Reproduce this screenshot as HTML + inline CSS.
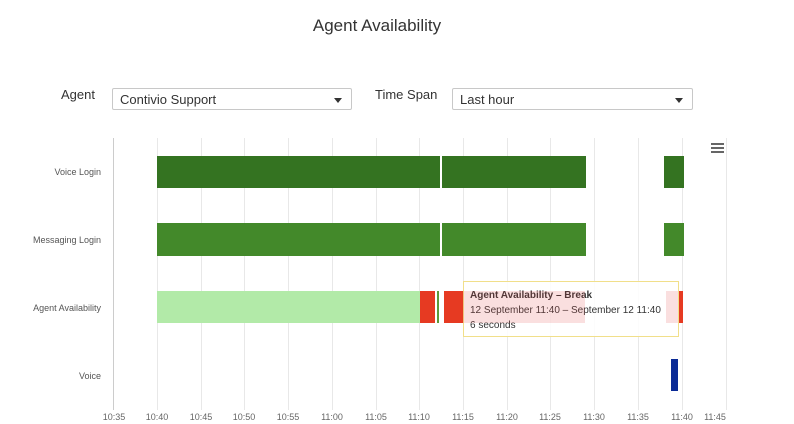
<!DOCTYPE html>
<html><head><style>
body{margin:0;width:794px;height:424px;background:#fff;font-family:"Liberation Sans",sans-serif;position:relative;overflow:hidden}
.a{position:absolute}
.g{position:absolute;top:138px;height:272px;width:1px;background:#e8e8e8}
.lab{position:absolute;font-size:9px;color:#555;text-align:right;width:90px;left:11px}
.tk{position:absolute;top:412px;font-size:9px;color:#666;width:30px;text-align:center}
.sel{position:absolute;height:22px;border:1px solid #c8c8c8;border-radius:2px;font-size:13px;color:#333;line-height:22px;padding-left:7px;box-sizing:border-box}
.sel:after{content:"";position:absolute;right:9px;top:9px;border-left:4px solid transparent;border-right:4px solid transparent;border-top:5px solid #333}
</style></head><body>
<div class="a" style="left:0;width:754px;top:16px;text-align:center;font-size:17px;color:#333">Agent Availability</div>
<div class="a" style="left:61px;top:87px;font-size:13px;color:#333">Agent</div>
<div class="sel" style="left:112px;top:88px;width:240px">Contivio Support</div>
<div class="a" style="left:375px;top:87px;font-size:13px;color:#333">Time Span</div>
<div class="sel" style="left:452px;top:88px;width:241px">Last hour</div>
<div class="a" style="left:711px;top:143px;width:13px;height:2px;background:#666;box-shadow:0 4px 0 #666,0 8px 0 #666"></div>
<div class="a" style="left:113px;top:138px;width:1px;height:272px;background:#ccc"></div>
<div class="g" style="left:157px"></div><div class="g" style="left:201px"></div><div class="g" style="left:244px"></div><div class="g" style="left:288px"></div><div class="g" style="left:332px"></div><div class="g" style="left:376px"></div><div class="g" style="left:419px"></div><div class="g" style="left:463px"></div><div class="g" style="left:507px"></div><div class="g" style="left:550px"></div><div class="g" style="left:594px"></div><div class="g" style="left:638px"></div><div class="g" style="left:682px"></div><div class="g" style="left:726px"></div>
<div class="lab" style="top:167px">Voice Login</div>
<div class="lab" style="top:235px">Messaging Login</div>
<div class="lab" style="top:303px">Agent Availability</div>
<div class="lab" style="top:371px">Voice</div>
<div class="a" style="left:157px;top:156px;width:429px;height:32px;background:#347321"></div>
<div class="a" style="left:440px;top:156px;width:2px;height:32px;background:#fff"></div>
<div class="a" style="left:664px;top:156px;width:20px;height:32px;background:#347321"></div>
<div class="a" style="left:157px;top:223px;width:429px;height:33px;background:#43892a"></div>
<div class="a" style="left:440px;top:223px;width:2px;height:33px;background:#fff"></div>
<div class="a" style="left:664px;top:223px;width:20px;height:33px;background:#43892a"></div>
<div class="a" style="left:157px;top:291px;width:263px;height:32px;background:#b2eaa8"></div>
<div class="a" style="left:420px;top:291px;width:15px;height:32px;background:#e63a22"></div>
<div class="a" style="left:437px;top:291px;width:2px;height:32px;background:#5c9a3a"></div>
<div class="a" style="left:444px;top:291px;width:19px;height:32px;background:#e63a22"></div>
<div class="a" style="left:678px;top:291px;width:5px;height:32px;background:#e63a22"></div>
<div class="a" style="left:671px;top:359px;width:7px;height:32px;background:#0a2a96"></div>
<div class="a" style="left:463px;top:281px;width:216px;height:56px;background:rgba(255,255,255,0.85);border:1px solid #f1df8a;box-sizing:border-box;font-size:10px;color:#333;padding:6px 6px;line-height:15px">
<b>Agent Availability – Break</b><br>12 September 11:40 – September 12 11:40<br>6 seconds</div>
<div class="a" style="left:463px;top:291px;width:122px;height:32px;background:rgba(230,80,80,0.18)"></div>
<div class="a" style="left:666px;top:291px;width:12px;height:32px;background:rgba(230,80,80,0.18)"></div>
<div class="tk" style="left:99px">10:35</div><div class="tk" style="left:142px">10:40</div><div class="tk" style="left:186px">10:45</div><div class="tk" style="left:229px">10:50</div><div class="tk" style="left:273px">10:55</div><div class="tk" style="left:317px">11:00</div><div class="tk" style="left:361px">11:05</div><div class="tk" style="left:404px">11:10</div><div class="tk" style="left:448px">11:15</div><div class="tk" style="left:492px">11:20</div><div class="tk" style="left:535px">11:25</div><div class="tk" style="left:579px">11:30</div><div class="tk" style="left:623px">11:35</div><div class="tk" style="left:667px">11:40</div><div class="tk" style="left:700px">11:45</div>
</body></html>
